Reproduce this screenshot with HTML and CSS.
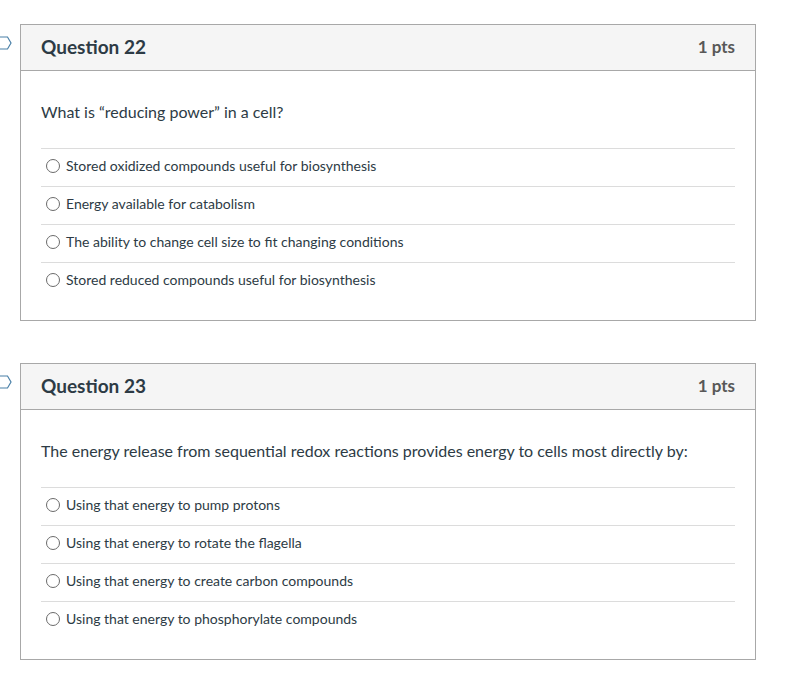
FILE: index.html
```html
<!DOCTYPE html>
<html>
<head>
<meta charset="utf-8">
<link rel="stylesheet" href="styles.css">
</head>
<body>
<div class="quiz">
  <div class="question">
    <svg class="flag" width="12" height="14" viewBox="0 0 12 14"><path d="M-4 1 H7.5 L11 7 L7.5 13 H-4" fill="none" stroke="#4a80a8" stroke-width="1.2"/></svg>
    <div class="header">
      <span class="title">Question 22</span>
      <span class="pts">1 pts</span>
    </div>
    <div class="body">
      <div class="qtext">What is “reducing power” in a cell?</div>
      <div class="answers">
        <label class="answer"><span class="radio"></span>Stored oxidized compounds useful for biosynthesis</label>
        <label class="answer"><span class="radio"></span>Energy available for catabolism</label>
        <label class="answer"><span class="radio"></span>The ability to change cell size to ﬁt changing conditions</label>
        <label class="answer"><span class="radio"></span>Stored reduced compounds useful for biosynthesis</label>
      </div>
    </div>
  </div>
  <div class="question">
    <svg class="flag" width="12" height="14" viewBox="0 0 12 14"><path d="M-4 1 H7.5 L11 7 L7.5 13 H-4" fill="none" stroke="#4a80a8" stroke-width="1.2"/></svg>
    <div class="header">
      <span class="title">Question 23</span>
      <span class="pts">1 pts</span>
    </div>
    <div class="body">
      <div class="qtext">The energy release from sequential redox reactions provides energy to cells most directly by:</div>
      <div class="answers">
        <label class="answer"><span class="radio"></span>Using that energy to pump protons</label>
        <label class="answer"><span class="radio"></span>Using that energy to rotate the ﬂagella</label>
        <label class="answer"><span class="radio"></span>Using that energy to create carbon compounds</label>
        <label class="answer"><span class="radio"></span>Using that energy to phosphorylate compounds</label>
      </div>
    </div>
  </div>
</div>
</body>
</html>
```
FILE: styles.css
```css
html, body {
  margin: 0;
  padding: 0;
  background: #fff;
}
body {
  font-family: Lato, "Open Sans", sans-serif;
  color: #2d3b45;
}
.quiz {
  padding: 24px 0 0 20px;
  width: 736px;
  display: flex;
  flex-direction: column;
  gap: 42px;
}
.question {
  position: relative;
  border: 1px solid #a8a8a8;
}
.flag {
  position: absolute;
  left: -21px;
  top: 11px;
}
.header {
  height: 45px;
  background: #f5f5f5;
  border-bottom: 1px solid #a8a8a8;
  display: flex;
  align-items: center;
  justify-content: space-between;
  padding: 0 20px;
}
.title {
  font-size: 19px;
  font-weight: 700;
  color: #2d3b45;
  position: relative;
  top: -1px;
}
.pts {
  font-size: 17px;
  font-weight: 700;
  color: #585858;
  position: relative;
  top: -1px;
}
.body {
  padding: 29px 20px 20px;
}
.qtext {
  font-size: 16px;
  line-height: 24px;
  margin-bottom: 24px;
}
.answer {
  display: flex;
  align-items: center;
  height: 37px;
  border-top: 1px solid #dcdcdc;
  font-size: 14px;
  line-height: 18px;
  color: #2d3b45;
  padding-bottom: 3px;
  box-sizing: border-box;
  height: 38px;
}
.radio {
  box-sizing: border-box;
  width: 14px;
  height: 14px;
  border: 1px solid #6b6b6b;
  border-radius: 50%;
  margin: 0 6px 0 5px;
  background: #fff;
}
```
